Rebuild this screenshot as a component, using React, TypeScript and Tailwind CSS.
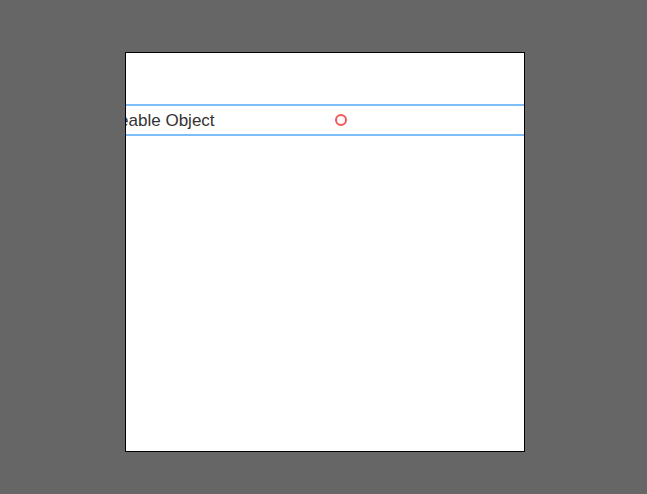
export default function App() {
  return (
    <div className="h-screen w-full bg-[#666666] pl-[125px] pt-[52px]">
      <div className="h-[400px] w-[400px] overflow-hidden border border-black bg-white">
        <div className="pt-[51px]">
          <div className="relative -ml-[39px] flex h-[32px] w-[600px] items-center border-y-2 border-[#7cbef8] font-['Liberation_Sans',Arial,sans-serif] text-[17px] text-[#333333]">
            <span className="pt-[2px]">Moveable Object</span>
            <span className="absolute left-[248px] top-1/2 h-[12px] w-[12px] -translate-y-1/2 rounded-full border-2 border-[#f55555]" />
          </div>
        </div>
      </div>
    </div>
  )
}
